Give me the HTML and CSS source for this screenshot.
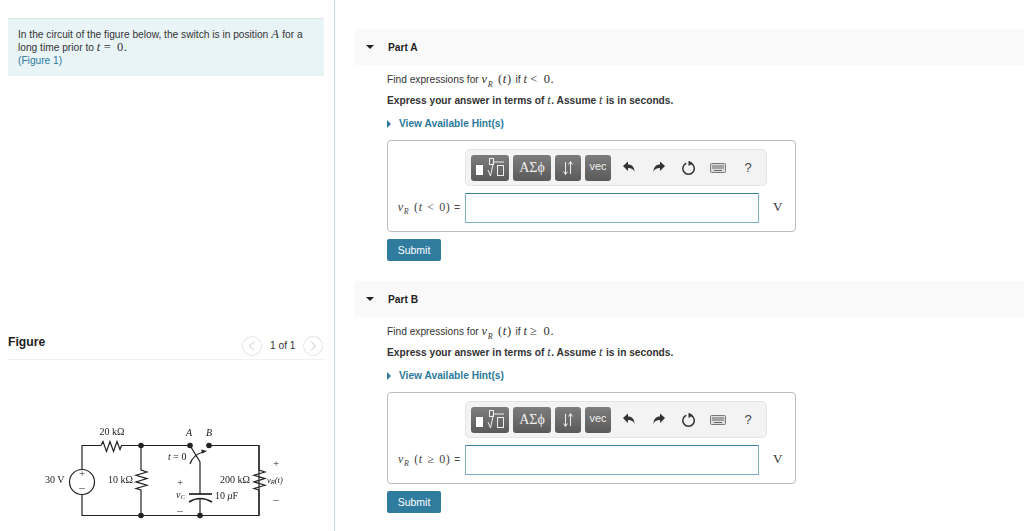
FILE: index.html
```html
<!DOCTYPE html>
<html lang="en">
<head>
<meta charset="utf-8">
<title>Circuit problem</title>
<link rel="stylesheet" href="styles.css">
</head>
<body>
<svg class="defs" width="0" height="0" aria-hidden="true">
  <defs>
    <symbol id="i-templates" viewBox="0 0 38 26">
      <rect x="5" y="10" width="7" height="10" fill="#fff"/>
      <g fill="none" stroke="#eee" stroke-width="1">
        <rect x="18.5" y="3.5" width="4" height="6"/>
        <path d="M17 15l2.500 6 3-14H33"/>
        <rect x="26.5" y="10.5" width="6" height="10"/>
      </g>
    </symbol>
    <symbol id="i-arrows" viewBox="0 0 26 26">
      <g fill="none" stroke="#eee" stroke-width="1">
        <path d="M10.5 7v12M8.5 16.5l2 3 2-3"/>
        <path d="M15.5 19V7M13.5 9.5l2-3 2 3"/>
      </g>
    </symbol>
    <symbol id="i-undo" viewBox="-1 1 14 14">
      <path d="M1 6l5-4.500v3c4 0 6.500 2.500 6.500 7.500-1-3-3-4-6.500-4v3z" fill="#333"/>
    </symbol>
    <symbol id="i-redo" viewBox="-1 1 14 14">
      <path d="M13 6L8 1.500v3C4 4.500 1.500 7 1.500 12c1-3 3-4 6.500-4v3z" fill="#333"/>
    </symbol>
    <symbol id="i-reset" viewBox="-1 .5 14 14">
      <path d="M4.300 2.800a5.700 5.700 0 1 0 4.500 0" fill="none" stroke="#333" stroke-width="1.500"/>
      <path d="M6.500 0l4.500 2.800-4.500 2.800z" fill="#333"/>
    </symbol>
    <symbol id="i-keys" viewBox="0 0 16 10">
      <rect x=".5" y=".5" width="15" height="9" rx="1" fill="#ddd" stroke="#777"/>
      <path d="M2 3h12M2 5h12M4 7.500h8" stroke="#666" stroke-width="1"/>
    </symbol>
    <symbol id="i-left" viewBox="0 0 20 20">
      <path d="M12 5.500L7.500 10l4.500 4.500" fill="none" stroke="#c4c4c4" stroke-width="1"/>
    </symbol>
    <symbol id="i-right" viewBox="0 0 20 20">
      <path d="M8 5.500l4.500 4.500L8 14.500" fill="none" stroke="#c4c4c4" stroke-width="1"/>
    </symbol>
  </defs>
</svg>

<aside class="left">
  <section class="prompt">
    <p>In the circuit of the figure below, the switch is in position <i class="m">A</i> for a<br>
    long time prior to <i class="m">t</i> <span class="m">= 0.</span><br>
    <a class="link" href="#fig">(Figure 1)</a></p>
  </section>

  <header class="figure-head" id="fig">
    <h2>Figure</h2>
    <div class="pager">
      <span class="circle"><svg width="20" height="20"><use href="#i-left"/></svg></span>
      <span class="count">1 of 1</span>
      <span class="circle"><svg width="20" height="20"><use href="#i-right"/></svg></span>
    </div>
  </header>

  <svg class="circuit" width="270" height="110" viewBox="30 420 270 110">
    <g class="wire">
      <path d="M101 445.500H82V515.500H259V445.500H209"/>
      <path d="M101 445.500l2-4 3.500 10 3.500-10 3.500 10 3.500-10 3 8 1.500-4H190"/>
      <path d="M141 445.500V470l6 2-11 3.300 11 3.300-11 3.300 11 3.300-11 3.300 5 1.500V515.500"/>
      <path d="M259 445.500V470l6 2-11 3.300 11 3.300-11 3.300 11 3.300-11 3.300 5 1.500V515.500"/>
      <path d="M190 445.500l10 16.500V494M200 498.500V515.500"/>
      <path class="heavy" d="M189 494h23"/>
      <path class="heavy" d="M189 502q11-7 23 0"/>
      <path d="M190 464q3-9 13-12"/>
    </g>
    <path d="M207 451l-6-1.500 1.500 4z" fill="#222"/>
    <circle class="source" cx="82" cy="482" r="12.500"/>
    <g fill="#222">
      <circle cx="141" cy="445.500" r="2.800"/>
      <circle cx="141" cy="515.500" r="2.800"/>
      <circle cx="190" cy="445.500" r="2.800"/>
      <circle cx="209" cy="445.500" r="2.800"/>
      <circle cx="200" cy="515.500" r="2.800"/>
    </g>
    <g class="ctext">
      <text x="112" y="435" text-anchor="middle">20 kΩ</text>
      <text x="45" y="483">30 V</text>
      <text x="108" y="483">10 kΩ</text>
      <text x="220" y="483">200 kΩ</text>
      <text x="215" y="499">10 <tspan font-style="italic">μ</tspan>F</text>
      <text class="sign" x="82" y="477" text-anchor="middle">+</text>
      <text class="sign" x="82" y="491" text-anchor="middle">–</text>
      <text class="sign" x="180" y="486" text-anchor="middle">+</text>
      <text class="sign" x="180" y="514" text-anchor="middle">–</text>
      <text class="sign" x="276" y="467" text-anchor="middle">+</text>
      <text class="sign" x="276" y="503" text-anchor="middle">–</text>
      <text x="168" y="460"><tspan font-style="italic">t</tspan> = 0</text>
      <text class="it" x="186" y="436">A</text>
      <text class="it" x="206" y="436">B</text>
      <text class="it" x="176" y="498">v<tspan font-size="7" dy="1">C</tspan></text>
      <text class="it small" x="267" y="483">v<tspan font-size="6.500" dy="1">R</tspan><tspan dy="-1">(t)</tspan></text>
    </g>
  </svg>
</aside>

<main class="right">
  <section class="part">
    <header class="part-head"><span class="caret-down"></span><h3>Part A</h3></header>
    <div class="part-body">
      <p class="q">Find expressions for <i class="m">v<sub>R</sub></i> <span class="m mp">(<i>t</i>)</span> if <i class="m">t</i> <span class="m">&lt; 0.</span></p>
      <p class="q bold">Express your answer in terms of <i class="m">t</i>. Assume <i class="m">t</i> is in seconds.</p>
      <a class="hint" href="#a"><span class="caret-right"></span>View Available Hint(s)</a>
      <div class="answer">
        <div class="toolbar">
          <span class="btn w38"><svg width="38" height="26"><use href="#i-templates"/></svg></span>
          <span class="btn w38 greek">ΑΣϕ</span>
          <span class="btn w26"><svg width="26" height="26"><use href="#i-arrows"/></svg></span>
          <span class="btn w26 vec">vec</span>
          <span class="tool"><svg width="14" height="14"><use href="#i-undo"/></svg></span>
          <span class="tool"><svg width="14" height="14"><use href="#i-redo"/></svg></span>
          <span class="tool"><svg width="14" height="14"><use href="#i-reset"/></svg></span>
          <span class="tool"><svg width="16" height="10"><use href="#i-keys"/></svg></span>
          <span class="tool help">?</span>
        </div>
        <label class="eq"><i class="m">v<sub>R</sub></i> <span class="m mp">(<i>t</i> &lt; 0)</span> =</label>
        <div class="input-row"><span class="field"></span><span class="unit">V</span></div>
      </div>
      <span class="submit">Submit</span>
    </div>
  </section>

  <section class="part">
    <header class="part-head"><span class="caret-down"></span><h3>Part B</h3></header>
    <div class="part-body">
      <p class="q">Find expressions for <i class="m">v<sub>R</sub></i> <span class="m mp">(<i>t</i>)</span> if <i class="m">t</i> <span class="m">≥ 0.</span></p>
      <p class="q bold">Express your answer in terms of <i class="m">t</i>. Assume <i class="m">t</i> is in seconds.</p>
      <a class="hint" href="#b"><span class="caret-right"></span>View Available Hint(s)</a>
      <div class="answer">
        <div class="toolbar">
          <span class="btn w38"><svg width="38" height="26"><use href="#i-templates"/></svg></span>
          <span class="btn w38 greek">ΑΣϕ</span>
          <span class="btn w26"><svg width="26" height="26"><use href="#i-arrows"/></svg></span>
          <span class="btn w26 vec">vec</span>
          <span class="tool"><svg width="14" height="14"><use href="#i-undo"/></svg></span>
          <span class="tool"><svg width="14" height="14"><use href="#i-redo"/></svg></span>
          <span class="tool"><svg width="14" height="14"><use href="#i-reset"/></svg></span>
          <span class="tool"><svg width="16" height="10"><use href="#i-keys"/></svg></span>
          <span class="tool help">?</span>
        </div>
        <label class="eq"><i class="m">v<sub>R</sub></i> <span class="m mp">(<i>t</i> ≥ 0)</span> =</label>
        <div class="input-row"><span class="field"></span><span class="unit">V</span></div>
      </div>
      <span class="submit">Submit</span>
    </div>
  </section>
</main>
</body>
</html>
```

FILE: styles.css
```css
* { box-sizing: border-box; }
html, body { margin: 0; height: 531px; overflow: hidden; }
body {
  display: flex;
  background: #fff;
  color: #333;
  font-family: "Liberation Sans", Arial, sans-serif;
  font-size: 10.2px;
  line-height: 13px;
}
p, h2, h3 { margin: 0; }
a { text-decoration: none; }
.defs { position: absolute; }

.m {
  font-family: "Liberation Serif", "DejaVu Serif", serif;
  font-size: 12.5px;
  font-weight: 400;
  letter-spacing: .6px;
  word-spacing: 2px;
}
.m sub { font-size: 8px; line-height: 0; }
.mp { margin: 0 1px 0 2px; }

.left {
  width: 335px;
  height: 531px;
  flex: none;
  padding: 18px 10px 0 8px;
  border-right: 1px solid #c6d5e6;
}
.prompt {
  height: 58px;
  padding: 9px 10px;
  background: #e9f4f7;
  border-top: 1px solid #dfe5e7;
}
.link { color: #2c7a9c; }

.figure-head {
  display: flex;
  justify-content: space-between;
  align-items: center;
  height: 31px;
  margin-top: 253px;
  padding-bottom: 3px;
  border-bottom: 1px solid #f1f1f1;
}
.figure-head h2 { font-size: 12.2px; font-weight: 700; color: #222; }
.pager { display: flex; align-items: center; gap: 8px; margin-top: 6px; margin-right: 1px; }
.count { width: 25px; text-align: center; white-space: nowrap; color: #333; }
.circle {
  display: block;
  width: 20px;
  height: 20px;
  border-radius: 50%;
  box-shadow: inset 0 0 0 1px #e6e6e6;
}
.circle svg { display: block; }

.circuit { display: block; margin: 60px 0 0 22px; filter: blur(.35px); }
.wire { fill: none; stroke: #222; stroke-width: 1.2; }
.heavy { stroke-width: 1.7; }
.source { fill: #fff; stroke: #222; stroke-width: 1.2; }
.ctext { font-family: "Liberation Serif", serif; font-size: 10px; fill: #222; }
.it { font-style: italic; }
.small { font-size: 8.500px; }
.sign { font-size: 11px; }

.right { flex: 1; min-width: 0; padding: 29px 0 0 20px; }
.part { height: 252px; }
.part-head {
  display: flex;
  align-items: center;
  height: 36px;
  padding-left: 11px;
  background: #f9f9f9;
}
.part-head h3 { margin-left: 14px; font-size: 10.2px; font-weight: 700; color: #222; }
.caret-down {
  width: 0;
  height: 0;
  border-left: 4.500px solid transparent;
  border-right: 4.500px solid transparent;
  border-top: 4.500px solid #222;
}
.part-body { padding: 8px 0 0 32px; }
.q { height: 13px; margin-bottom: 8px; }
.bold { font-weight: 700; color: #333; }
.hint {
  display: flex;
  align-items: center;
  height: 13px;
  margin-top: 10px;
  color: #2c7a9c;
  font-weight: 700;
}
.caret-right {
  width: 0;
  height: 0;
  margin-right: 8px;
  border-top: 4px solid transparent;
  border-bottom: 4px solid transparent;
  border-left: 4px solid #2c7a9c;
}

.answer {
  display: grid;
  grid-template-columns: 77px 1fr;
  align-items: center;
  align-content: start;
  row-gap: 7px;
  width: 409px;
  height: 92px;
  margin-top: 10px;
  padding-top: 8px;
  border: 1px solid #bdbdbd;
  border-radius: 4px;
}
.toolbar {
  grid-column: 2;
  display: flex;
  align-items: center;
  gap: 4px;
  width: 302px;
  height: 37px;
  padding-left: 5px;
  background: #f3f3f3;
  border: 1px solid #e3e3e3;
  border-radius: 5px;
}
.btn {
  display: flex;
  align-items: center;
  justify-content: center;
  height: 26px;
  border-radius: 3px;
  background: linear-gradient(#7d7d7d, #5a5a5a);
  color: #f0f0f0;
}
.w38 { width: 38px; }
.w26 { width: 26px; }
.greek { font-family: "Liberation Serif", serif; font-size: 14px; }
.vec { padding-bottom: 2px; font-size: 11px; }
.tool {
  display: flex;
  align-items: center;
  justify-content: center;
  width: 26px;
  height: 26px;
  color: #333;
}
.tool svg { display: block; }
.help { padding-bottom: 1px; font-size: 13px; color: #444; }
.eq {
  justify-self: end;
  padding: 0 5px 2px 0;
  white-space: nowrap;
  font-size: 10px;
  color: #444;
}
.eq .m { font-size: 12px; word-spacing: 1px; }
.input-row { display: flex; align-items: center; }
.field {
  display: block;
  width: 294px;
  height: 30px;
  border: 1px solid #79aec3;
  border-top-color: #3f7f9f;
}
.unit {
  margin-left: 14px;
  padding-bottom: 3px;
  font-family: "Liberation Serif", serif;
  font-size: 13px;
}

.submit {
  display: flex;
  align-items: center;
  justify-content: center;
  width: 54px;
  height: 22px;
  margin-top: 7px;
  background: #2f7c9f;
  border-radius: 2px;
  color: #fff;
  font-size: 10.5px;
}
```
